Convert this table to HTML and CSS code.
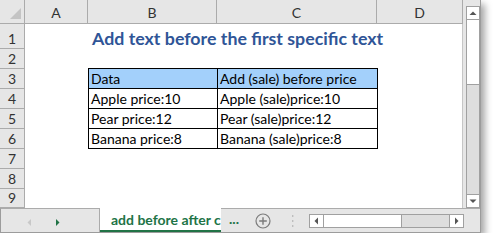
FILE: index.html
```html
<!DOCTYPE html>
<html>
<head>
<meta charset="utf-8">
<link rel="stylesheet" href="styles.css">
</head>
<body>
<div class="window">
  <div class="main">
    <div class="sheet">
      <div class="corner"><svg width="24" height="23" viewBox="0 0 24 23"><polygon points="10,19 21,19 21,8" fill="#c4c4c4"/></svg></div>
      <div class="ch">A</div>
      <div class="ch">B</div>
      <div class="ch">C</div>
      <div class="ch">D</div>

      <div class="rh r1">1</div>
      <div class="rh">2</div>
      <div class="rh">3</div>
      <div class="rh">4</div>
      <div class="rh">5</div>
      <div class="rh">6</div>
      <div class="rh">7</div>
      <div class="rh">8</div>
      <div class="rh">9</div>

      <div class="area"></div>
      <div class="title">Add text before the first specific text</div>
      <div class="data">
        <div class="cell head">Data</div>
        <div class="cell head">Add (sale) before price</div>
        <div class="cell">Apple price:10</div>
        <div class="cell">Apple (sale)price:10</div>
        <div class="cell">Pear price:12</div>
        <div class="cell">Pear (sale)price:12</div>
        <div class="cell">Banana price:8</div>
        <div class="cell">Banana (sale)price:8</div>
      </div>
    </div>
    <div class="vscroll">
      <div class="sbtn"><svg width="12" height="12" viewBox="0 0 12 12"><polygon points="2.5,8 9.5,8 6,4.5" fill="#555"/></svg></div>
      <div class="vthumb"></div>
      <div class="vtrack"></div>
      <div class="sbtn"><svg width="12" height="12" viewBox="0 0 12 12"><polygon points="2.5,4.5 9.5,4.5 6,8" fill="#555"/></svg></div>
    </div>
  </div>
  <div class="tabbar">
    <div class="nav">
      <svg width="99" height="23" viewBox="0 0 99 23"><polygon points="30,10 30,17 26.5,13.5" fill="#c8c8c8"/><polygon points="55,10 55,17 58.5,13.5" fill="#217346"/></svg>
    </div>
    <div class="tab"><span class="tabtext">add before after c</span></div>
    <div class="rest">
      <span class="more">...</span>
      <svg class="plus" width="16" height="16" viewBox="0 0 16 16"><circle cx="8" cy="8" r="7" fill="none" stroke="#7b7b7b" stroke-width="1.2"/><path d="M8 4.2V11.8M4.2 8H11.8" stroke="#7b7b7b" stroke-width="1.4"/></svg>
      <svg class="dots" width="3" height="14" viewBox="0 0 3 14"><rect x="1" y="1" width="1.4" height="2" fill="#bdbdbd"/><rect x="1" y="6" width="1.4" height="2" fill="#bdbdbd"/><rect x="1" y="11" width="1.4" height="2" fill="#bdbdbd"/></svg>
      <div class="hscroll">
        <div class="hbtn"><svg width="13" height="12" viewBox="0 0 13 12"><polygon points="8,2.5 8,9.5 4.5,6" fill="#555"/></svg></div>
        <div class="hthumb"></div>
        <div class="htrack"></div>
        <div class="hbtn"><svg width="13" height="12" viewBox="0 0 13 12"><polygon points="5,2.5 5,9.5 8.5,6" fill="#555"/></svg></div>
      </div>
    </div>
  </div>
</div>
</body>
</html>
```

FILE: styles.css
```css
* { box-sizing: border-box; }
body {
  margin: 0;
  background: #fff;
  font-family: Lato, "Open Sans", sans-serif;
}
.window {
  width: 481px;
  height: 233px;
  background: #e6e6e6;
  border-right: 1px solid #9c9c9c;
  border-bottom: 1px solid #9c9c9c;
  box-shadow: 4px 4px 7px rgba(0, 0, 0, 0.35);
  display: flex;
  flex-direction: column;
}
.main {
  display: flex;
  height: 208px;
}
.sheet {
  width: 463px;
  display: grid;
  grid-template-columns: 25px 63px 129px 160px 86px;
  grid-template-rows: 24px 25px repeat(7, 20px) 19px;
  background: #e6e6e6;
}
.corner {
  border-right: 1px solid #ababab;
  border-bottom: 1px solid #ababab;
}
.corner svg { display: block; }
.ch {
  border-right: 1px solid #ababab;
  border-bottom: 1px solid #ababab;
  font-size: 14px;
  color: #333;
  display: flex;
  align-items: center;
  justify-content: center;
  padding-top: 2px;
}
.ch:last-of-type { border-right: none; }
.rh {
  grid-column: 1;
  border-right: 1px solid #ababab;
  border-bottom: 1px solid #ababab;
  font-size: 14px;
  color: #333;
  display: flex;
  align-items: flex-end;
  justify-content: center;
  line-height: 19px;
}
.rh:last-of-type { border-bottom: none; }
.area {
  grid-column: 2 / 6;
  grid-row: 2 / 11;
  background: #fff;
  border-right: 1px solid #c6c6c6;
}
.title {
  grid-column: 3 / 6;
  grid-row: 2;
  padding-left: 4px;
  padding-top: 2px;
  font-size: 17.8px;
  font-weight: 700;
  color: #2f5597;
  white-space: nowrap;
  display: flex;
  align-items: center;
}
.data {
  grid-column: 3 / 5;
  grid-row: 4 / 8;
  margin-top: -1px;
  display: grid;
  grid-template-columns: 129px 160px;
  grid-auto-rows: 20px;
  border-left: 1px solid #000;
  border-top: 1px solid #000;
  align-self: start;
  justify-self: start;
}
.cell {
  border-right: 1px solid #000;
  border-bottom: 1px solid #000;
  font-size: 14px;
  color: #000;
  padding-left: 2px;
  line-height: 19px;
  white-space: nowrap;
  overflow: hidden;
}
.cell.head { background: #a3d0fb; }
.vscroll {
  margin-left: 3px;
  margin-top: 6px;
  width: 14px;
  display: flex;
  flex-direction: column;
  border-left: 1px solid #a0a0a0;
  border-right: 1px solid #a0a0a0;
  background: #dedede;
}
.sbtn {
  height: 14px;
  background: #fff;
  border-top: 1px solid #a0a0a0;
  border-bottom: 1px solid #a0a0a0;
  display: flex;
  align-items: center;
  justify-content: center;
}
.sbtn svg { display: block; }
.vthumb {
  height: 65px;
  background: #fff;
  border-bottom: 1px solid #a0a0a0;
}
.vtrack { flex: 1; }
.tabbar {
  display: flex;
  height: 24px;
}
.nav {
  width: 100px;
  border-left: 1px solid #9c9c9c;
  border-top: 1px solid #ababab;
  border-right: 1px solid #ababab;
}
.nav svg { display: block; }
.tab {
  width: 121px;
  background: #fff;
  border-bottom: 2px solid #217346;
  overflow: hidden;
  white-space: nowrap;
  padding-left: 11px;
  display: flex;
  align-items: center;
}
.tabtext {
  font-size: 14px;
  font-weight: 700;
  color: #217346;
}
.rest {
  flex: 1;
  border-top: 1px solid #ababab;
  display: flex;
  align-items: center;
}
.more {
  margin-left: 8px;
  font-size: 14px;
  font-weight: 700;
  color: #217346;
  line-height: 14px;
  padding-bottom: 4px;
}
.plus { margin-left: 16px; display: block; }
.dots { margin-left: 20px; display: block; }
.hscroll {
  margin-left: 15px;
  width: 155px;
  height: 14px;
  display: flex;
  border-top: 1px solid #a0a0a0;
  border-bottom: 1px solid #a0a0a0;
  background: #dedede;
}
.hbtn {
  width: 15px;
  background: #fff;
  border-left: 1px solid #a0a0a0;
  border-right: 1px solid #a0a0a0;
}
.hbtn svg { display: block; }
.hthumb {
  width: 78px;
  background: #fff;
  border-right: 1px solid #a0a0a0;
}
.htrack { flex: 1; }
```
